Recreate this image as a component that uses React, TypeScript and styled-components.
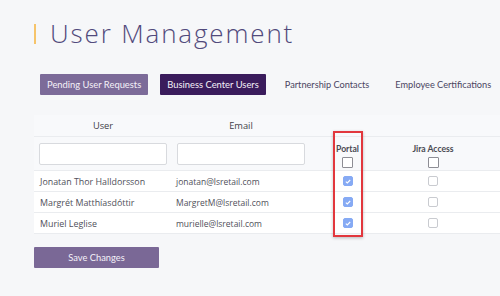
import React from "react";
import styled, { createGlobalStyle } from "styled-components";

const Global = createGlobalStyle`
  html, body { margin: 0; padding: 0; background: #f6f7f9; overflow: hidden; }
  body { font-family: "Open Sans", "Liberation Sans", sans-serif; }
  * { box-sizing: border-box; }
`;

const Page = styled.div`
  width: 500px;
  height: 296px;
  padding: 17px 0 0 34px;
  overflow: hidden;
`;

const TitleRow = styled.div`
  display: flex;
  align-items: center;
  gap: 14px;
  height: 32px;
`;

const Accent = styled.div`
  width: 2px;
  height: 20px;
  margin-top: 2px;
  background: #f6c46b;
`;

const Title = styled.h1`
  margin: 0;
  font-family: "Open Sans", sans-serif;
  font-weight: 300;
  font-size: 26px;
  line-height: 32px;
  letter-spacing: 1.85px;
  color: #514a7c;
  white-space: nowrap;
`;

const Tabs = styled.div`
  display: flex;
  align-items: center;
  margin: 25px 0 0 6px;
  height: 21px;
`;

const TabButton = styled.button<{ $active?: boolean }>`
  height: 21px;
  padding: 0 7px;
  margin-right: ${(p) => (p.$active ? "19px" : "12px")};
  border: none;
  border-radius: 1px;
  background: ${(p) => (p.$active ? "#3a1c5c" : "#7c6b99")};
  color: #f4f1f8;
  font-family: Lato, "Open Sans", sans-serif;
  font-size: 9.4px;
  line-height: 21px;
  white-space: nowrap;
`;

const TabLink = styled.span`
  font-family: Lato, "Open Sans", sans-serif;
  font-size: 9.2px;
  color: #4a4562;
  margin-right: 26px;
  white-space: nowrap;
`;

const TableWrap = styled.div`
  position: relative;
  margin-top: 20px;
  width: 520px;
  background: #f8f9fb;
`;

const Row = styled.div<{ $white?: boolean; $h: number }>`
  display: grid;
  grid-template-columns: 138px 138px 75px 96px 1fr;
  align-items: center;
  height: ${(p) => p.$h}px;
  background: ${(p) => (p.$white ? "#ffffff" : "transparent")};
  border-bottom: 1px solid #eaecef;
`;

const HeadCell = styled.div`
  text-align: center;
  font-size: 9.3px;
  font-weight: 400;
  color: #3f3f48;
`;

const FilterCell = styled.div`
  padding: 0 5px;
  display: flex;
  justify-content: center;
`;

const FilterInput = styled.input`
  width: 128px;
  height: 22px;
  border: 1px solid #d8dade;
  border-radius: 2px;
  background: #fff;
  outline: none;
`;

const CheckHead = styled.div`
  display: flex;
  flex-direction: column;
  align-items: center;
  gap: 1px;
  padding-top: 3px;
`;

const CheckLabel = styled.div`
  font-family: Lato, "Open Sans", sans-serif;
  font-weight: 700;
  font-size: 8.6px;
  line-height: 13px;
  color: #4a4a52;
`;

const BigBox = styled.div`
  width: 11px;
  height: 11px;
  border: 1px solid #8d8d94;
  border-radius: 1px;
  background: #fff;
`;

const Cell = styled.div<{ $email?: boolean }>`
  padding-left: ${(p) => (p.$email ? "4px" : "6px")};
  font-size: ${(p) => (p.$email ? "8.5px" : "8.9px")};
  color: #50505a;
  white-space: nowrap;
  overflow: hidden;
`;

const CheckCell = styled.div`
  display: flex;
  justify-content: center;
`;

const SmallBox = styled.div<{ $checked?: boolean }>`
  width: 10px;
  height: 10px;
  border-radius: 2px;
  border: 1px solid ${(p) => (p.$checked ? "#86aaf4" : "#c9cbd0")};
  background: ${(p) => (p.$checked ? "#86aaf4" : "#fff")};
  display: flex;
  align-items: center;
  justify-content: center;
`;

const Highlight = styled.div`
  position: absolute;
  left: 299px;
  top: 16px;
  width: 30px;
  height: 106px;
  border: 2px solid #e2373d;
  box-shadow: 0 1px 3px rgba(0, 0, 0, 0.25);
  pointer-events: none;
`;

const SaveButton = styled.button`
  display: block;
  margin-top: 13px;
  width: 125px;
  height: 21px;
  border: none;
  border-radius: 1px;
  background: #7a6896;
  color: #f5f2f9;
  font-family: Lato, "Open Sans", sans-serif;
  font-size: 9.3px;
`;

const users = [
  { name: "Jonatan Thor Halldorsson", email: "jonatan@lsretail.com" },
  { name: "Margrét Matthíasdóttir", email: "MargretM@lsretail.com" },
  { name: "Muriel Leglise", email: "murielle@lsretail.com" },
];

const Check = () => (
  <svg width="6" height="5" viewBox="0 0 6 5">
    <path d="M0.8 2.6 L2.3 3.9 L5.2 1" fill="none" stroke="#fff" strokeWidth="1.1" />
  </svg>
);

export default function App() {
  return (
    <>
      <Global />
      <Page>
        <TitleRow>
          <Accent />
          <Title>User Management</Title>
        </TitleRow>
        <Tabs>
          <TabButton>Pending User Requests</TabButton>
          <TabButton $active>Business Center Users</TabButton>
          <TabLink>Partnership Contacts</TabLink>
          <TabLink>Employee Certifications</TabLink>
        </Tabs>
        <TableWrap>
          <Row $h={22}>
            <HeadCell>User</HeadCell>
            <HeadCell>Email</HeadCell>
            <div />
            <div />
            <div />
          </Row>
          <Row $h={34}>
            <FilterCell>
              <FilterInput />
            </FilterCell>
            <FilterCell>
              <FilterInput />
            </FilterCell>
            <CheckHead>
              <CheckLabel>Portal</CheckLabel>
              <BigBox />
            </CheckHead>
            <CheckHead>
              <CheckLabel>Jira Access</CheckLabel>
              <BigBox />
            </CheckHead>
            <div />
          </Row>
          {users.map((u) => (
            <Row $white $h={21} key={u.email}>
              <Cell>{u.name}</Cell>
              <Cell $email>{u.email}</Cell>
              <CheckCell>
                <SmallBox $checked>
                  <Check />
                </SmallBox>
              </CheckCell>
              <CheckCell>
                <SmallBox />
              </CheckCell>
              <div />
            </Row>
          ))}
          <Highlight />
        </TableWrap>
        <SaveButton>Save Changes</SaveButton>
      </Page>
    </>
  );
}
